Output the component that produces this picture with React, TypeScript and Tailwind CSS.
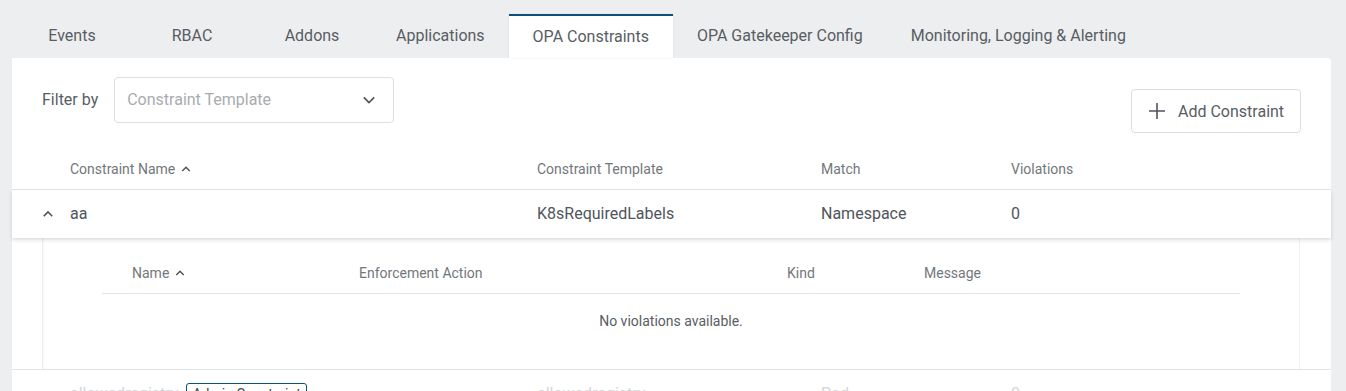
import React from "react";

const Chevron = ({ dir = "down", className = "", sw = 2 }: { dir?: "up" | "down"; className?: string; sw?: number }) => (
  <svg viewBox="0 0 24 24" className={className} fill="none" stroke="currentColor" strokeWidth={sw} strokeLinecap="square">
    {dir === "down" ? <path d="M6.5 9.5 12 15l5.5-5.5" /> : <path d="M6.5 14.5 12 9l5.5 5.5" />}
  </svg>
);

const tabs = ["Events", "RBAC", "Addons", "Applications", "OPA Constraints", "OPA Gatekeeper Config", "Monitoring, Logging & Alerting"];

export default function App() {
  return (
    <div className="w-[1346px] h-[391px] overflow-hidden bg-[#edeef0] text-[#50555b]" style={{ fontFamily: "Roboto, 'Noto Sans', sans-serif" }}>
      {/* Tabs */}
      <div className="flex pl-3 pt-[14px]">
        {tabs.map((t) =>
          t === "OPA Constraints" ? (
            <div key={t} className="min-w-[120px] h-[44px] px-6 flex items-center justify-center bg-white border-t-2 border-[#0b507d] text-[16px] text-[#585d63] shadow-[0_0_2px_rgba(0,0,0,0.08)]">
              {t}
            </div>
          ) : (
            <div key={t} className="min-w-[120px] h-[44px] px-6 flex items-center justify-center text-[16px] text-[#585d63]">
              {t}
            </div>
          )
        )}
      </div>

      {/* Card */}
      <div className="ml-3 mr-[15px] bg-white rounded-[4px] rounded-tl-none">
        <div className="h-[88px] flex justify-between items-start px-[30px] pt-[19px]">
          <div className="flex items-center">
            <span className="text-[16px] text-[#585d63] mr-4">Filter by</span>
            <div className="w-[280px] h-[46px] border border-[#dcdee0] rounded-[4px] flex items-center justify-between pl-3 pr-[14px]">
              <span className="text-[16px] text-[#a8acb0]">Constraint Template</span>
              <Chevron className="w-5 h-5 text-[#50555b]" />
            </div>
          </div>
          <div className="mt-3 w-[170px] h-[44px] border border-[#dcdee0] rounded-[4px] flex items-center pl-[16px] gap-3">
            <svg viewBox="0 0 18 18" className="w-[18px] h-[18px] text-[#50555b]" fill="none" stroke="currentColor" strokeWidth={1.6}>
              <path d="M9 1v16M1 9h16" />
            </svg>
            <span className="text-[16px] text-[#585d63] pt-[1px]">Add Constraint</span>
          </div>
        </div>

        {/* Table header */}
        <div className="h-[44px] pt-[3px] flex items-center border-b border-[#e3e4e6] text-[14px] text-[#72777c]">
          <div className="w-[58px]" />
          <div className="w-[467px] flex items-center gap-[4px]">
            Constraint Name
            <Chevron dir="up" className="w-[14px] h-[14px] text-[#50555b]" sw={2.6} />
          </div>
          <div className="w-[284px]">Constraint Template</div>
          <div className="w-[190px]">Match</div>
          <div>Violations</div>
        </div>

        {/* Row aa */}
        <div className="relative z-10 h-[48px] flex items-center text-[16px] bg-white shadow-[0_2px_4px_rgba(0,0,0,0.14)]">
          <div className="w-[58px] pl-[28px]">
            <Chevron dir="up" className="w-[16px] h-[16px] text-[#50555b]" sw={2.4} />
          </div>
          <div className="w-[467px]">aa</div>
          <div className="w-[284px]">K8sRequiredLabels</div>
          <div className="w-[190px]">Namespace</div>
          <div>0</div>
        </div>

        {/* Expanded area */}
        <div className="h-[132px] border-b border-[#e3e4e6] pl-[30px] pr-[31px]">
          <div className="h-full bg-white border-l border-r border-[#eeeff0] shadow-[inset_1px_0_2px_rgba(0,0,0,0.04)] px-[59px] pt-[15px]">
            <div className="h-[41px] flex items-center border-b border-[#e3e4e6] text-[14px] text-[#72777c]">
              <div className="w-[257px] pl-[30px] flex items-center gap-[4px]">
                Name
                <Chevron dir="up" className="w-[14px] h-[14px] text-[#50555b]" sw={2.6} />
              </div>
              <div className="w-[428px]">Enforcement Action</div>
              <div className="w-[137px]">Kind</div>
              <div>Message</div>
            </div>
            <div className="h-[54px] flex items-center justify-center text-[14px] text-[#585d63]">No violations available.</div>
          </div>
        </div>

        {/* Next row (faded) */}
        <div className="h-[48px] flex items-center text-[16px] text-[#d4d6d8]">
          <div className="w-[58px] pl-[28px]">
            <Chevron className="w-[16px] h-[16px]" />
          </div>
          <div className="w-[467px] flex items-center gap-2">
            allowedregistry
            <span className="border border-[#0b507d] rounded-[3px] px-[5px] text-[14px] leading-[20px] text-[#40454b]">Admin Constraint</span>
          </div>
          <div className="w-[284px]">allowedregistry</div>
          <div className="w-[190px]">Pod</div>
          <div>0</div>
        </div>
      </div>
    </div>
  );
}
